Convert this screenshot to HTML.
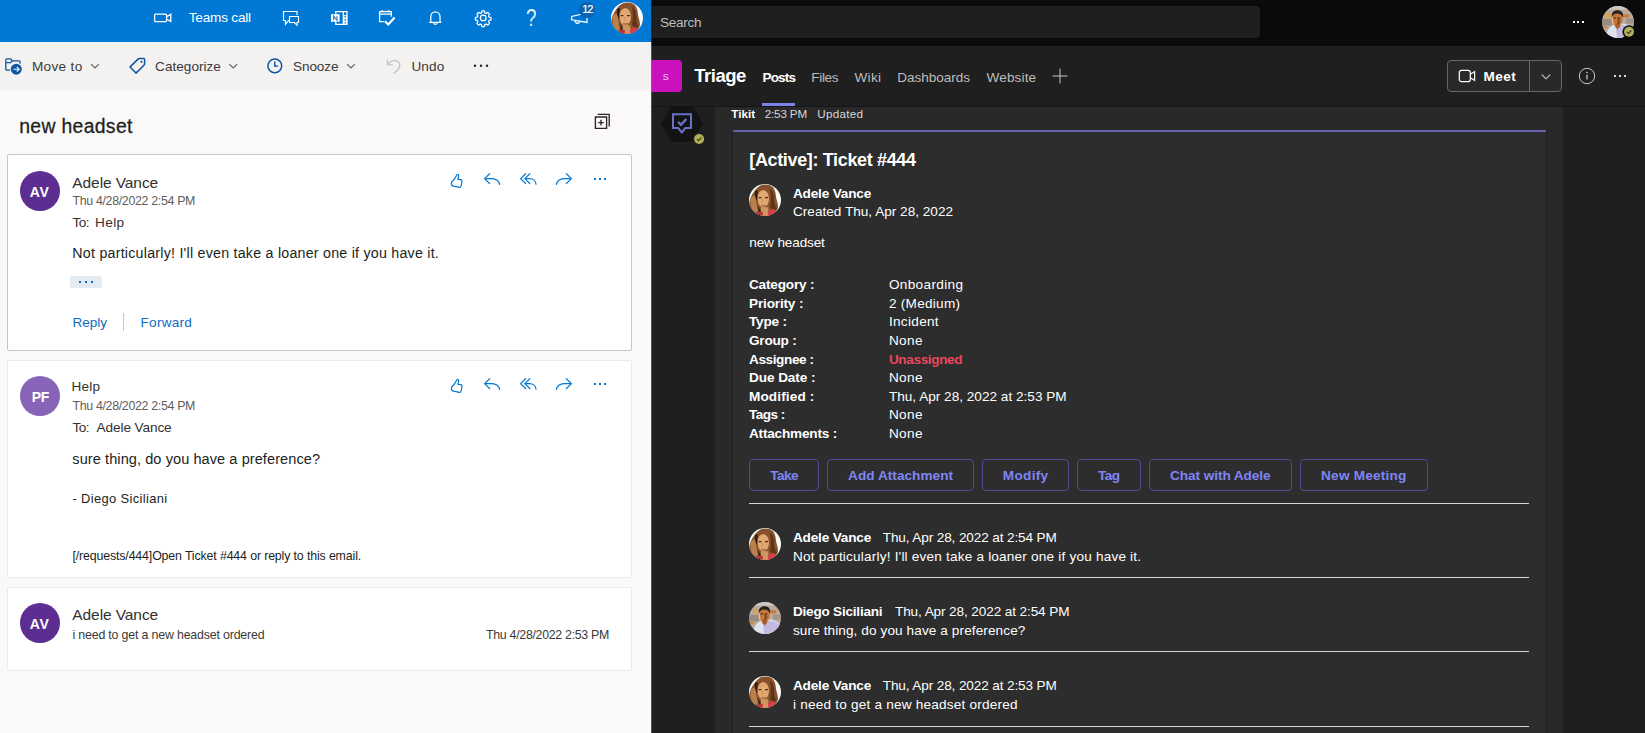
<!DOCTYPE html>
<html lang="en"><head><meta charset="utf-8"><title>Outlook and Teams</title>
<style>

*{box-sizing:border-box;margin:0;padding:0}
html,body{width:1645px;height:733px;overflow:hidden;background:#1f1f1f;font-family:"Liberation Sans",sans-serif}
.a{position:absolute}
.t{position:absolute;white-space:pre;line-height:normal}
svg{position:absolute;overflow:visible}
#ol{position:absolute;left:0;top:0;width:651px;height:733px;background:#faf9f8;overflow:hidden}
#tm{position:absolute;left:651px;top:0;width:994px;height:733px;background:#1f1f1f;overflow:hidden}
.card{position:absolute;left:7px;width:625px;background:#fff;border:1px solid #edebe9;border-radius:2px}
.av{position:absolute;width:40px;height:40px;border-radius:50%}
.btn{position:absolute;top:459px;height:32px;border:1px solid #4a4c94;border-radius:4px}
.sep{position:absolute;left:749px;width:780px;height:1px;background:#d6d6d6}

</style></head>
<body>
<svg width="0" height="0" style="position:absolute"><defs>
<clipPath id="c32"><circle cx="16" cy="16" r="16"/></clipPath>
<g id="adele" clip-path="url(#c32)">
<rect width="32" height="32" fill="#fbfaf8"/>
<path d="M10 2.600C13-.4 21-.6 24.200 3.600c2.800 3.600 2.400 8 3.400 12 1 4 2.200 7 .6 10L24 32H4C1 29-.5 24 .2 19c.6-4 2-7 4-10 1.600-2.600 3.600-5 5.800-6.400z" fill="#87522c"/>
<path d="M1.600 14.500c1.500-2.500 3.600-3.400 5.200-2.800 0 5 .6 10 2.700 14.300L6 29.500c-3.400-3.400-5-9-4.400-15z" fill="#b9804c"/>
<path d="M20.500 4.500c3 1.500 4.700 5.500 4.700 10.500s1 8 2.600 10c-2.200 1.200-5.200 0-6.800-2 1.200-5 1.500-12.500-.5-18.500z" fill="#5e3519"/>
<ellipse cx="14.200" cy="14.800" rx="5.800" ry="8.900" fill="#e2a872"/>
<path d="M6.300 7.200c1-1.200 2.200-1.200 2.700-.2-1 3-1 7-.4 10-2.200-2-3.300-6-2.300-9.800z" fill="#2e1c10"/>
<path d="M8.500 21c.8 2.500 2 4.500 3.800 5.500l-.8 2.500c-2-1.500-3.200-4.500-3-8z" fill="#3a2212"/>
<path d="M12 23.300h7.200l.8 8.700h-8.600z" fill="#cf9560"/>
<path d="M9.600 13.700h2.800M16 13.700h2.900" stroke="#4a2a16" stroke-width="1.300"/>
<path d="M13.800 15v3.600" stroke="#c98a58" stroke-width="1"/>
<path d="M12.300 21.300c1.500 1 3.300 1 4.800 0" stroke="#a85a3c" stroke-width="1.200" fill="none"/>
<path d="M9 29.200c1.500-1.500 3.500-1.800 5-.800l-.5 3.600H8.500z" fill="#c62b3a"/>
<path d="M19.200 27c2.500-2 6-2 8 0l-2.200 5h-6z" fill="#d6404d"/>
</g>
<g id="diego" clip-path="url(#c32)">
<rect width="32" height="32" fill="#b7aaa0"/>
<rect y="0" width="32" height="3.500" fill="#cfc8c2"/>
<rect x="4.200" y="6.600" width="4.800" height="5.600" fill="#d8a458"/>
<rect x="21" y="8.200" width="6.200" height="3.300" fill="#cc7c3c"/>
<rect x="0" y="13" width="9.800" height="6.400" fill="#9a8a82"/>
<rect x="24" y="12.500" width="8" height="5" fill="#a39488"/>
<rect x="0.500" y="20" width="5" height="2.400" fill="#c98850"/>
<path d="M4.500 32c0-8 3.500-13 10-13.500l6-1c5 .5 9.500 2.500 11.500 6V32z" fill="#dde4ee"/>
<path d="M14 23l5-4.500c5 .5 10.500 2.500 13 5V32H15z" fill="#c3b9e0"/>
<ellipse cx="15.300" cy="13.400" rx="5.400" ry="7" fill="#c8783a"/>
<path d="M9.900 11.500c-.8-5 2.500-7.500 5.800-7.200 4 0 6.200 3 5.200 7.500-1-3-3-4.200-5.800-4.200-2.200 0-4 1-5.200 3.900z" fill="#26221f"/>
<path d="M10.200 10c1 3 .8 6 1.500 9-1.700-2-2.500-5-1.500-9z" fill="#ecc9a0"/>
<path d="M14.500 10.500c1.500 2 1.500 6-.5 9 2.500 0 4-2 4.500-5z" fill="#8a4a22"/>
<path d="M11.500 12h2.400M15.800 12h2.600" stroke="#3a2014" stroke-width="1.100"/>
<path d="M12.800 20.500l2.800 3 3-3.500-1-1.500h-4z" fill="#a85e2c"/>
</g>
</defs></svg>
<div id="ol">
<header>
<div class="a" style="left:0;top:0;width:651px;height:42px;background:#0078d4"></div>
<div class="a" style="left:0;top:42px;width:651px;height:48px;background:#f3f2f1"></div>
<svg width="651" height="42" viewBox="0 0 651 42" fill="none" stroke="#fff" stroke-width="1.250" style="left:0;top:0">
<rect x="154.6" y="14.2" width="12" height="7.4" rx="1"/><path d="M166.6 16.6l4.2-2.2v7l-4.2-2.2"/>
<path d="M297 15v-3.500h-13.500v9h2v3.800l3-3.800h.500M289.500 16.500h9v6h-1.500v2.700l-2.700-2.700h-4.800z" stroke-width="1.150"/>
<path d="M335.800 14.200v-2.600h11.200v12.800h-11.200v-2.600M343.300 11.600v12.800"/><rect x="343.300" y="15.200" width="3.700" height="9.200" fill="#fff" stroke="none"/><rect x="331" y="14.200" width="8.600" height="7.600" fill="#fff" stroke="none"/>
<path d="M344.500 16.100h1.500v1.500h-1.500zM344.500 19.200h1.500v1.500h-1.500zM344.500 22.200h1.500v1.400h-1.500z" fill="#0078d4" stroke="none"/>
<path d="M333.600 20.300v-4.400l3.400 4.400v-4.400" stroke="#3a7bd0" stroke-width="1.100"/>
<path d="M384 21.7h-4.4v-10h11.7v5M379.6 14.2h11.7M382.3 10v2.6M388.6 10v2.6"/><path d="M384.9 21.3l3.4 3.2 6.3-7" stroke-width="2.2"/>
<path d="M429.2 22.4h12.2M430.8 22.4v-6a4.6 4.6 0 0 1 9.2 0v6M433.6 22.6a1.8 1.8 0 0 0 3.6 0"/>
<g transform="translate(483.200 17.900) scale(.860) translate(-483.200 -18)" stroke-width="1.450"><circle cx="483.200" cy="18" r="3.300"/><path d="M481.800 9.900h2.800l.5 2.200 1.600.700 1.900-1.200 2 2-1.200 1.900.700 1.600 2.200.500v2.800l-2.200.500-.700 1.600 1.200 1.900-2 2-1.900-1.200-1.600.700-.5 2.200h-2.800l-.5-2.200-1.600-.700-1.900 1.200-2-2 1.200-1.900-.700-1.600-2.200-.500v-2.800l2.200-.500.700-1.600-1.200-1.900 2-2 1.900 1.200 1.600-.700z" stroke-linejoin="round"/></g>
<path d="M587 13l-15.400 3.400v3.400l15.400 2.600zM575.100 20.600c.200 3.400 4.200 3.600 4.700.800"/>
</svg>
<span class="t" style="left:526.19px;top:5.00px;font-size:23.50px;color:rgba(255,255,255,.92);transform:scaleX(.8);transform-origin:0 0;">?</span>
<span class="t" style="left:188.79px;top:10.00px;font-size:13.58px;letter-spacing:-0.207px;color:#fff;">Teams call</span>
<div class="a" style="left:579.100px;top:1.600px;width:16px;height:16px;border-radius:50%;background:#0d63ad"></div>
<span class="t" style="left:582.27px;top:3.00px;font-size:11.06px;letter-spacing:-1.055px;color:#fff;-webkit-text-stroke:0.20px #fff;">12</span>
<svg width="32" height="32" viewBox="0 0 32 32" style="left:611px;top:2px"><use href="#adele"/></svg>
</header><nav>
<svg width="651" height="48" viewBox="0 42 651 48" fill="none" stroke="#0e56a2" stroke-width="1.300" style="left:0;top:42px">
<path d="M10 70.2h-3.2a1 1 0 0 1-1-1v-9.4a1 1 0 0 1 1-1h4l1.6 2h6.6a1 1 0 0 1 1 1v2M5.8 62.6h4.8l1.8-1.8"/>
<circle cx="16.3" cy="69.2" r="5.5" fill="#0e56a2" stroke="none"/><path d="M13.4 69.2h5.6M16.8 66.8l2.4 2.4-2.4 2.4" stroke="#fff" stroke-width="1.1"/>
<path d="M130.100 66.900l8.200-8q.700-.600 1.700-.500l3.400.200q1.300.100 1.300 1.400l-.100 3.600q0 1-.700 1.700l-7.900 7.800z" stroke-width="1.500" stroke-linejoin="round"/><circle cx="141.500" cy="61.800" r="1.100" fill="#0e56a2" stroke="none"/>
<circle cx="274.800" cy="65.900" r="6.900" stroke-width="1.500"/><path d="M274.700 61.600v4.500h3.300" stroke-width="1.400"/>
<path d="M387.4 59.4v5.4h5.4M387.8 64.4c3-4.4 8.6-5 11-2 2.6 3.2.2 7.8-5.4 11" stroke="#c8c6c4"/>
<path d="M91.2 64.2l3.8 3.7 3.8-3.7" stroke="#6a6866" stroke-width="1.200"/>
<path d="M229.4 64.2l3.8 3.7 3.8-3.7" stroke="#6a6866" stroke-width="1.200"/>
<path d="M347.2 64.2l3.8 3.7 3.8-3.7" stroke="#6a6866" stroke-width="1.200"/>
<circle cx="475.0" cy="65.8" r="1.2" fill="#252423" stroke="none"/>
<circle cx="481.0" cy="65.8" r="1.2" fill="#252423" stroke="none"/>
<circle cx="487.0" cy="65.8" r="1.2" fill="#252423" stroke="none"/>
</svg>
<span class="t" style="left:31.89px;top:59.00px;font-size:13.58px;letter-spacing:0.338px;color:#3b3a39;">Move to</span>
<span class="t" style="left:155.09px;top:59.00px;font-size:13.58px;letter-spacing:0.020px;color:#3b3a39;">Categorize</span>
<span class="t" style="left:293.09px;top:59.00px;font-size:13.58px;letter-spacing:-0.131px;color:#3b3a39;">Snooze</span>
<span class="t" style="left:411.39px;top:59.00px;font-size:13.58px;letter-spacing:0.152px;color:#3b3a39;">Undo</span>
</nav><main>
<span class="t" style="left:19.22px;top:115.00px;font-size:19.40px;letter-spacing:0.319px;color:#201f1e;-webkit-text-stroke:0.28px #201f1e;">new headset</span>
<svg width="18" height="18" viewBox="0 0 18 18" fill="none" stroke="#2d2430" stroke-width="1.350" style="left:594px;top:113px"><path d="M1.4 4h11.2v11.4h-11.2zM3.6 1.4h11.6v12" /><path d="M7 6.8v5.6M4.2 9.6h5.6" /></svg>
<article>
<div class="card" style="top:154px;height:197px;border-color:#c8c6c4"></div>
<div class="av" style="left:20px;top:171px;background:#5c2e91"></div>
<span class="t" style="left:29.78px;top:184.00px;font-size:14.06px;font-weight:700;letter-spacing:0.704px;color:#fff;">AV</span>
<span class="t" style="left:72.33px;top:174.00px;font-size:15.52px;letter-spacing:-0.100px;color:#323130;">Adele Vance</span>
<span class="t" style="left:72.43px;top:194.00px;font-size:12.36px;letter-spacing:-0.312px;color:#605e5c;">Thu 4/28/2022 2:54 PM</span>
<span class="t" style="left:72.39px;top:215.00px;font-size:13.58px;letter-spacing:-0.483px;color:#323130;">To:</span>
<span class="t" style="left:95.09px;top:215.00px;font-size:13.58px;letter-spacing:0.359px;color:#323130;">Help</span>
<span class="t" style="left:72.37px;top:245.00px;font-size:14.23px;letter-spacing:0.240px;color:#201f1e;">Not particularly! I&#x27;ll even take a loaner one if you have it.</span>
<div class="a" style="left:70px;top:276px;width:32px;height:12px;background:#e3ecf3;border-radius:2px"></div>
<div class="a" style="left:79.3px;top:281.2px;width:1.4px;height:1.4px;background:#0f6cbd"></div>
<div class="a" style="left:85.3px;top:281.2px;width:1.4px;height:1.4px;background:#0f6cbd"></div>
<div class="a" style="left:91.3px;top:281.2px;width:1.4px;height:1.4px;background:#0f6cbd"></div>
<span class="t" style="left:72.39px;top:315.00px;font-size:13.58px;letter-spacing:-0.009px;color:#0f6cbd;">Reply</span>
<div class="a" style="left:123px;top:313px;width:1px;height:18px;background:#c8c6c4"></div>
<span class="t" style="left:140.59px;top:315.00px;font-size:13.58px;letter-spacing:0.238px;color:#0f6cbd;">Forward</span>
<svg width="180" height="24" viewBox="440 169 180 24" fill="none" stroke="#0078d4" stroke-width="1.200" stroke-linecap="round" stroke-linejoin="round" style="left:440px;top:169px"><path d="M453.4 180.4l2.4-3.6c.5-1.5 1.1-2.700 2-2.500 1 .3 1 1.500.6 3l-.5 2 2.800.300c1 .1 1.500 1 1.300 2l-.9 4.400c-.2 1-1 1.500-2 1.300l-5.300-1.100c-1.300-.300-2.500-1.400-2.500-2.800 0-1.300.7-2.300 2.100-3z"/><path d="M489.6 173.700l-5 4.900 5 4.900M485 178.600h7c4 0 7.300 2.700 7.600 5.800"/><path d="M525.600 173.700l-5 4.900 5 4.900M529.800 173.700l-5 4.900 5 4.900M525.200 178.600h4.400c3.500 0 6.200 2.400 6.400 5.600"/><path d="M566.400 173.700l5 4.900-5 4.900M571 178.600h-7c-4 0-7.200 2.600-7.600 5.800"/></svg><div class="a" style="left:594px;top:178px;width:2px;height:2px;background:#0078d4"></div><div class="a" style="left:599px;top:178px;width:2px;height:2px;background:#0078d4"></div><div class="a" style="left:604px;top:178px;width:2px;height:2px;background:#0078d4"></div>
</article><article>
<div class="card" style="top:360px;height:218px"></div>
<div class="av" style="left:20px;top:376px;background:#8764b8"></div>
<span class="t" style="left:31.78px;top:389.00px;font-size:14.06px;font-weight:700;letter-spacing:-0.330px;color:#fff;">PF</span>
<span class="t" style="left:71.39px;top:379.00px;font-size:13.58px;letter-spacing:0.284px;color:#323130;">Help</span>
<span class="t" style="left:72.43px;top:399.00px;font-size:12.36px;letter-spacing:-0.312px;color:#605e5c;">Thu 4/28/2022 2:54 PM</span>
<span class="t" style="left:72.39px;top:420.00px;font-size:13.58px;letter-spacing:-0.483px;color:#323130;">To:</span>
<span class="t" style="left:96.59px;top:420.00px;font-size:13.58px;letter-spacing:-0.093px;color:#323130;">Adele Vance</span>
<span class="t" style="left:72.36px;top:451.00px;font-size:14.55px;letter-spacing:0.072px;color:#201f1e;">sure thing, do you have a preference?</span>
<span class="t" style="left:72.41px;top:491.00px;font-size:12.93px;letter-spacing:0.358px;color:#201f1e;">- Diego Siciliani</span>
<span class="t" style="left:72.43px;top:549.00px;font-size:12.36px;letter-spacing:-0.136px;color:#201f1e;">[/requests/444]Open Ticket #444 or reply to this email.</span>
<svg width="180" height="24" viewBox="440 169 180 24" fill="none" stroke="#0078d4" stroke-width="1.200" stroke-linecap="round" stroke-linejoin="round" style="left:440px;top:374px"><path d="M453.4 180.4l2.4-3.6c.5-1.5 1.1-2.700 2-2.500 1 .3 1 1.500.6 3l-.5 2 2.800.300c1 .1 1.500 1 1.300 2l-.9 4.400c-.2 1-1 1.500-2 1.300l-5.300-1.100c-1.300-.300-2.500-1.400-2.500-2.800 0-1.300.7-2.300 2.100-3z"/><path d="M489.6 173.700l-5 4.900 5 4.900M485 178.600h7c4 0 7.300 2.700 7.600 5.800"/><path d="M525.600 173.700l-5 4.900 5 4.900M529.800 173.700l-5 4.900 5 4.900M525.200 178.600h4.400c3.500 0 6.200 2.400 6.400 5.600"/><path d="M566.400 173.700l5 4.900-5 4.900M571 178.600h-7c-4 0-7.200 2.600-7.600 5.800"/></svg><div class="a" style="left:594px;top:383px;width:2px;height:2px;background:#0078d4"></div><div class="a" style="left:599px;top:383px;width:2px;height:2px;background:#0078d4"></div><div class="a" style="left:604px;top:383px;width:2px;height:2px;background:#0078d4"></div>
</article><article>
<div class="card" style="top:587px;height:84px"></div>
<div class="av" style="left:20px;top:603px;background:#5c2e91"></div>
<span class="t" style="left:29.78px;top:616.00px;font-size:14.06px;font-weight:700;letter-spacing:0.704px;color:#fff;">AV</span>
<span class="t" style="left:72.33px;top:606.00px;font-size:15.52px;letter-spacing:-0.100px;color:#323130;">Adele Vance</span>
<span class="t" style="left:72.43px;top:628.00px;font-size:12.36px;letter-spacing:-0.168px;color:#3b3a39;">i need to get a new headset ordered</span>
<span class="t" style="left:486.03px;top:628.00px;font-size:12.36px;letter-spacing:-0.293px;color:#3b3a39;">Thu 4/28/2022 2:53 PM</span>
</article></main></div>
<div id="tm">
<header>
<div class="a" style="left:0;top:0;width:994px;height:46px;background:#0a0a0a"></div>
<div class="a" style="left:-20px;top:6px;width:629px;height:32px;background:#1f1f1f;border-radius:4px"></div>
<span class="t" style="left:9.09px;top:15.00px;font-size:13.58px;letter-spacing:-0.326px;color:#bdbdbd;">Search</span>
<div class="a" style="left:921.5px;top:20.8px;width:2px;height:2px;background:#fff"></div>
<div class="a" style="left:926.2px;top:20.8px;width:2px;height:2px;background:#fff"></div>
<div class="a" style="left:930.9px;top:20.8px;width:2px;height:2px;background:#fff"></div>
<svg width="36" height="36" viewBox="0 0 36 36" style="left:949px;top:4px"><g transform="translate(2 2)"><use href="#diego"/></g><circle cx="29" cy="27.800" r="6.600" fill="#0a0a0a"/><circle cx="29" cy="27.800" r="5" fill="#b0ae58"/><path d="M26.800 27.900l1.600 1.600 2.900-3" stroke="#3a3a20" stroke-width="1.200" fill="none"/></svg>
</header><nav>
<div class="a" style="left:0;top:46px;width:994px;height:60px;background:#1f1f1f"></div>
<div class="a" style="left:0;top:106px;width:994px;height:1px;background:#141414"></div>
<div class="a" style="left:0;top:60px;width:31px;height:32px;background:#ca10bf;border-radius:0 4px 4px 0"></div>
<span class="t" style="left:11.72px;top:72.00px;font-size:9.21px;color:#f2d4ee;">S</span>
<span class="t" style="left:43.14px;top:65.00px;font-size:18.54px;font-weight:700;letter-spacing:-0.457px;color:#ffffff;">Triage</span>
<span class="t" style="left:111.59px;top:70.00px;font-size:13.58px;font-weight:700;letter-spacing:-0.902px;color:#ffffff;">Posts</span>
<span class="t" style="left:160.29px;top:70.00px;font-size:13.58px;letter-spacing:-0.339px;color:#bdbdbd;">Files</span>
<span class="t" style="left:203.39px;top:70.00px;font-size:13.58px;letter-spacing:0.334px;color:#bdbdbd;">Wiki</span>
<span class="t" style="left:246.19px;top:70.00px;font-size:13.58px;letter-spacing:-0.034px;color:#bdbdbd;">Dashboards</span>
<span class="t" style="left:335.49px;top:70.00px;font-size:13.58px;letter-spacing:0.138px;color:#bdbdbd;">Website</span>
<div class="a" style="left:111px;top:103px;width:33px;height:3px;background:#7b83eb"></div>
<svg width="16" height="16" viewBox="0 0 16 16" style="left:400.6px;top:68px" stroke="#c8c8c8" stroke-width="1"><path d="M8 0.600v14.800M0.600 8h14.800"/></svg>
<div class="a" style="left:796px;top:60px;width:115px;height:32px;background:#292929;border:1px solid #666;border-radius:4px"></div>
<div class="a" style="left:878px;top:60px;width:1px;height:32px;background:#666"></div>
<svg width="20" height="16" viewBox="0 0 20 16" fill="none" stroke="#fff" stroke-width="1.200" style="left:807px;top:68px"><rect x="1.300" y="2.400" width="11" height="11.200" rx="2.200"/><path d="M12.300 6.200l4.300-2.700v9l-4.300-2.700"/></svg>
<span class="t" style="left:832.59px;top:69.00px;font-size:13.58px;font-weight:700;letter-spacing:0.434px;color:#ffffff;">Meet</span>
<svg width="10" height="6" viewBox="0 0 10 6" fill="none" stroke="#d0d0d0" stroke-width="1.100" style="left:890px;top:73.800px"><path d="M0.800 0.700l4.200 4.100 4.200-4.100"/></svg>
<svg width="18" height="18" viewBox="0 0 18 18" fill="none" stroke="#c8c8c8" stroke-width="1" style="left:927px;top:67px"><circle cx="9" cy="9" r="7.700"/><path d="M9 7.800v4.600" stroke-width="1.300"/><circle cx="9" cy="5.600" r="0.800" fill="#c8c8c8" stroke="none"/></svg>
<div class="a" style="left:963.0px;top:74.800px;width:2px;height:2px;background:#d6d6d6"></div>
<div class="a" style="left:968.2px;top:74.800px;width:2px;height:2px;background:#d6d6d6"></div>
<div class="a" style="left:973.4px;top:74.800px;width:2px;height:2px;background:#d6d6d6"></div>
</nav><main>
<div class="a" style="left:64px;top:107px;width:848px;height:626px;background:#292929"></div>
<div class="a" style="left:81px;top:130px;width:815px;height:603px;background:#2d2d2d;border-left:1px solid #1f1f1f;border-right:1px solid #1f1f1f"></div>
<div class="a" style="left:82px;top:130px;width:813px;height:2px;background:#6264a7"></div>
<svg width="64" height="50" viewBox="651 100 64 50" style="left:0;top:100px"><clipPath id="hx"><rect x="651" y="107" width="64" height="50"/></clipPath><path clip-path="url(#hx)" d="M661 123.500l10.500-18.200h21l10.500 18.200-10.500 18.200h-21z" fill="#131313"/><path d="M673 114.300h18v13.700h-5.600l-3.600 4.400-3.600-4.400h-5.200z" fill="none" stroke="#6970c8" stroke-width="2"/><path d="M678 121.800l3 3 5.300-5.800" fill="none" stroke="#6970c8" stroke-width="2.400"/><circle cx="699.100" cy="139" r="6.400" fill="#1f1f1f"/><circle cx="699.100" cy="139" r="5" fill="#b0ae58"/><path d="M696.900 139.100l1.600 1.600 2.900-3" stroke="#3a3a20" stroke-width="1.200" fill="none"/></svg>
<span class="t" style="left:80.25px;top:107.00px;font-size:11.64px;font-weight:700;letter-spacing:0.024px;color:#ffffff;">Tikit</span>
<span class="t" style="left:113.65px;top:107.00px;font-size:11.64px;letter-spacing:-0.127px;color:#d6d6d6;">2:53 PM</span>
<span class="t" style="left:166.35px;top:107.00px;font-size:11.64px;letter-spacing:0.293px;color:#d6d6d6;">Updated</span>
<article>
<span class="t" style="left:98.26px;top:150.00px;font-size:18.00px;font-weight:700;letter-spacing:-0.349px;color:#ffffff;">[Active]: Ticket #444</span>
<svg width="32" height="32" viewBox="0 0 32 32" style="left:98px;top:184px"><use href="#adele"/></svg>
<span class="t" style="left:141.99px;top:186.00px;font-size:13.58px;font-weight:700;letter-spacing:-0.176px;color:#ffffff;">Adele Vance</span>
<span class="t" style="left:141.99px;top:204.00px;font-size:13.58px;letter-spacing:0.011px;color:#ffffff;">Created Thu, Apr 28, 2022</span>
<span class="t" style="left:98.29px;top:235.00px;font-size:13.58px;letter-spacing:-0.140px;color:#ffffff;">new headset</span>
<span class="t" style="left:97.99px;top:277.00px;font-size:13.58px;font-weight:700;letter-spacing:-0.168px;color:#ffffff;">Category :</span>
<span class="t" style="left:237.89px;top:277.00px;font-size:13.58px;letter-spacing:0.361px;color:#ffffff;">Onboarding</span>
<span class="t" style="left:97.99px;top:296.00px;font-size:13.58px;font-weight:700;letter-spacing:-0.157px;color:#ffffff;">Priority :</span>
<span class="t" style="left:237.89px;top:296.00px;font-size:13.58px;letter-spacing:0.280px;color:#ffffff;">2 (Medium)</span>
<span class="t" style="left:97.99px;top:314.00px;font-size:13.58px;font-weight:700;letter-spacing:-0.202px;color:#ffffff;">Type :</span>
<span class="t" style="left:237.89px;top:314.00px;font-size:13.58px;letter-spacing:0.314px;color:#ffffff;">Incident</span>
<span class="t" style="left:97.99px;top:333.00px;font-size:13.58px;font-weight:700;letter-spacing:-0.208px;color:#ffffff;">Group :</span>
<span class="t" style="left:237.89px;top:333.00px;font-size:13.58px;letter-spacing:0.402px;color:#ffffff;">None</span>
<span class="t" style="left:97.99px;top:352.00px;font-size:13.58px;font-weight:700;letter-spacing:-0.390px;color:#ffffff;">Assignee :</span>
<span class="t" style="left:237.89px;top:352.00px;font-size:13.58px;font-weight:700;letter-spacing:-0.359px;color:#e8475f;">Unassigned</span>
<span class="t" style="left:97.99px;top:370.00px;font-size:13.58px;font-weight:700;letter-spacing:-0.068px;color:#ffffff;">Due Date :</span>
<span class="t" style="left:237.89px;top:370.00px;font-size:13.58px;letter-spacing:0.402px;color:#ffffff;">None</span>
<span class="t" style="left:97.99px;top:389.00px;font-size:13.58px;font-weight:700;letter-spacing:0.137px;color:#ffffff;">Modified :</span>
<span class="t" style="left:237.89px;top:389.00px;font-size:13.58px;letter-spacing:0.014px;color:#ffffff;">Thu, Apr 28, 2022 at 2:53 PM</span>
<span class="t" style="left:97.99px;top:407.00px;font-size:13.58px;font-weight:700;letter-spacing:-0.535px;color:#ffffff;">Tags :</span>
<span class="t" style="left:237.89px;top:407.00px;font-size:13.58px;letter-spacing:0.402px;color:#ffffff;">None</span>
<span class="t" style="left:97.99px;top:426.00px;font-size:13.58px;font-weight:700;letter-spacing:-0.190px;color:#ffffff;">Attachments :</span>
<span class="t" style="left:237.89px;top:426.00px;font-size:13.58px;letter-spacing:0.402px;color:#ffffff;">None</span>
<div class="btn" style="left:98px;width:70px"></div>
<span class="t" style="left:119.29px;top:468.00px;font-size:13.58px;font-weight:700;letter-spacing:-0.544px;color:#7f85f5;">Take</span>
<div class="btn" style="left:176px;width:147px"></div>
<span class="t" style="left:197.09px;top:468.00px;font-size:13.58px;font-weight:700;letter-spacing:0.044px;color:#7f85f5;">Add Attachment</span>
<div class="btn" style="left:331px;width:87px"></div>
<span class="t" style="left:351.79px;top:468.00px;font-size:13.58px;font-weight:700;letter-spacing:0.321px;color:#7f85f5;">Modify</span>
<div class="btn" style="left:426px;width:64px"></div>
<span class="t" style="left:447.09px;top:468.00px;font-size:13.58px;font-weight:700;letter-spacing:-0.555px;color:#7f85f5;">Tag</span>
<div class="btn" style="left:498px;width:143px"></div>
<span class="t" style="left:519.09px;top:468.00px;font-size:13.58px;font-weight:700;letter-spacing:-0.058px;color:#7f85f5;">Chat with Adele</span>
<div class="btn" style="left:649px;width:128px"></div>
<span class="t" style="left:670.09px;top:468.00px;font-size:13.58px;font-weight:700;letter-spacing:0.225px;color:#7f85f5;">New Meeting</span>
<section>
<div class="sep" style="left:98px;top:503px"></div>
<svg width="32" height="32" viewBox="0 0 32 32" style="left:98px;top:528px"><use href="#adele"/></svg>
<span class="t" style="left:141.99px;top:530.00px;font-size:13.58px;font-weight:700;letter-spacing:-0.176px;color:#ffffff;">Adele Vance</span>
<span class="t" style="left:231.79px;top:530.00px;font-size:13.58px;letter-spacing:-0.126px;color:#ffffff;">Thu, Apr 28, 2022 at 2:54 PM</span>
<span class="t" style="left:141.99px;top:549.00px;font-size:13.58px;letter-spacing:0.198px;color:#ffffff;">Not particularly! I&#x27;ll even take a loaner one if you have it.</span>
<div class="sep" style="left:98px;top:577px"></div>
<svg width="32" height="32" viewBox="0 0 32 32" style="left:98px;top:602px"><use href="#diego"/></svg>
<span class="t" style="left:141.99px;top:604.00px;font-size:13.58px;font-weight:700;letter-spacing:-0.229px;color:#ffffff;">Diego Siciliani</span>
<span class="t" style="left:243.99px;top:604.00px;font-size:13.58px;letter-spacing:-0.108px;color:#ffffff;">Thu, Apr 28, 2022 at 2:54 PM</span>
<span class="t" style="left:141.99px;top:623.00px;font-size:13.58px;letter-spacing:0.101px;color:#ffffff;">sure thing, do you have a preference?</span>
<div class="sep" style="left:98px;top:651px"></div>
<svg width="32" height="32" viewBox="0 0 32 32" style="left:98px;top:676px"><use href="#adele"/></svg>
<span class="t" style="left:141.99px;top:678.00px;font-size:13.58px;font-weight:700;letter-spacing:-0.176px;color:#ffffff;">Adele Vance</span>
<span class="t" style="left:231.79px;top:678.00px;font-size:13.58px;letter-spacing:-0.126px;color:#ffffff;">Thu, Apr 28, 2022 at 2:53 PM</span>
<span class="t" style="left:141.99px;top:697.00px;font-size:13.58px;letter-spacing:0.213px;color:#ffffff;">i need to get a new headset ordered</span>
<div class="sep" style="left:98px;top:726px"></div>
</section></article></main></div>
<div class="a" style="left:651px;top:0;width:1px;height:733px;background:linear-gradient(#054179 0,#054179 42px,#7c7b7a 42px,#7c7b7a 100%);opacity:.55"></div>
</body></html>
